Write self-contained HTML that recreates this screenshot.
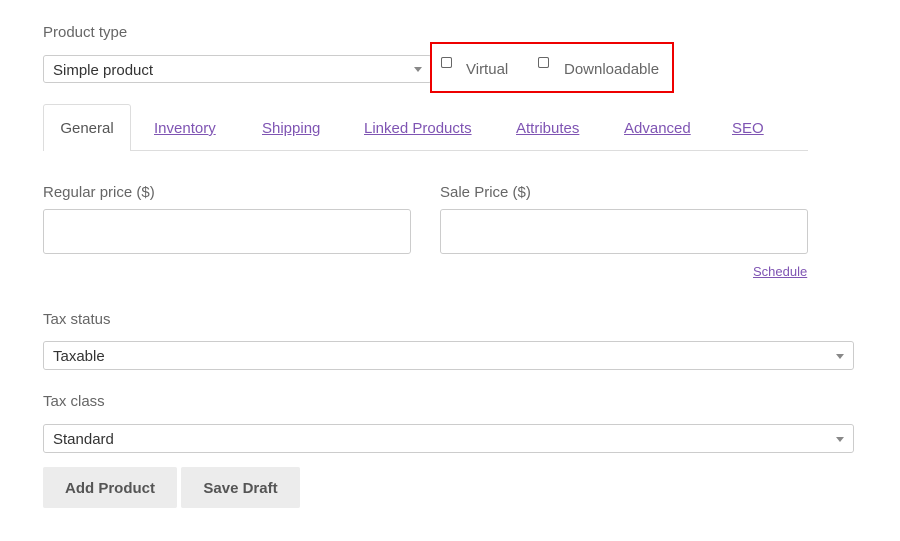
<!DOCTYPE html>
<html><head><style>
body{margin:0;width:900px;height:541px;background:#fff;font-family:"Liberation Sans",sans-serif;font-size:15px;color:#555;position:relative;overflow:hidden}
.a{position:absolute;white-space:nowrap}
.lbl{color:#666;line-height:20px}
.sel{position:absolute;border:1px solid #ccc;border-radius:3px;box-sizing:border-box;background:#fff;color:#333;padding-left:9px}
.sel:after{content:"";position:absolute;right:9px;top:50%;margin-top:-2px;border-left:4px solid transparent;border-right:4px solid transparent;border-top:5px solid #888}
.inp{position:absolute;border:1px solid #ccc;border-radius:3px;box-sizing:border-box;background:#fff}
.tab{position:absolute;top:119px;color:#7f54b3;text-decoration:underline;line-height:20px}
.cb{position:absolute;width:11px;height:11px;border:1px solid #666;border-radius:2px;box-sizing:border-box;background:#fff}
.btn{position:absolute;top:467px;height:41px;background:#ececec;font-weight:bold;color:#555;text-align:center;line-height:43px;border-radius:2px}
</style></head><body>
<div class="a lbl" style="left:43px;top:23px">Product type</div>
<div class="sel" style="left:43px;top:55px;width:389px;height:28px;line-height:29px">Simple product</div>
<div class="a" style="left:430px;top:42px;width:244px;height:51px;border:2px solid #e00;box-sizing:border-box"></div>
<div class="cb" style="left:441px;top:57px"></div>
<div class="a lbl" style="left:466px;top:60px">Virtual</div>
<div class="cb" style="left:538px;top:57px"></div>
<div class="a lbl" style="left:564px;top:60px">Downloadable</div>
<div class="a" style="left:43px;top:150px;width:765px;height:1px;background:#ddd"></div>
<div class="a" style="left:43px;top:104px;width:88px;height:47px;border:1px solid #ddd;border-bottom:none;box-sizing:border-box;border-radius:3px 3px 0 0;background:#fff;text-align:center;line-height:47px;color:#555">General</div>
<div class="tab" style="left:154px">Inventory</div>
<div class="tab" style="left:262px">Shipping</div>
<div class="tab" style="left:364px">Linked Products</div>
<div class="tab" style="left:516px">Attributes</div>
<div class="tab" style="left:624px">Advanced</div>
<div class="tab" style="left:732px">SEO</div>
<div class="a lbl" style="left:43px;top:183px">Regular price ($)</div>
<div class="inp" style="left:43px;top:209px;width:368px;height:45px"></div>
<div class="a lbl" style="left:440px;top:183px">Sale Price ($)</div>
<div class="inp" style="left:440px;top:209px;width:368px;height:45px"></div>
<div class="a" style="left:753px;top:264px;font-size:13px;color:#7f54b3;text-decoration:underline">Schedule</div>
<div class="a lbl" style="left:43px;top:310px">Tax status</div>
<div class="sel" style="left:43px;top:341px;width:811px;height:29px;line-height:30px">Taxable</div>
<div class="a lbl" style="left:43px;top:392px">Tax class</div>
<div class="sel" style="left:43px;top:424px;width:811px;height:29px;line-height:30px">Standard</div>
<div class="btn" style="left:43px;width:134px">Add Product</div>
<div class="btn" style="left:181px;width:119px">Save Draft</div>
</body></html>
